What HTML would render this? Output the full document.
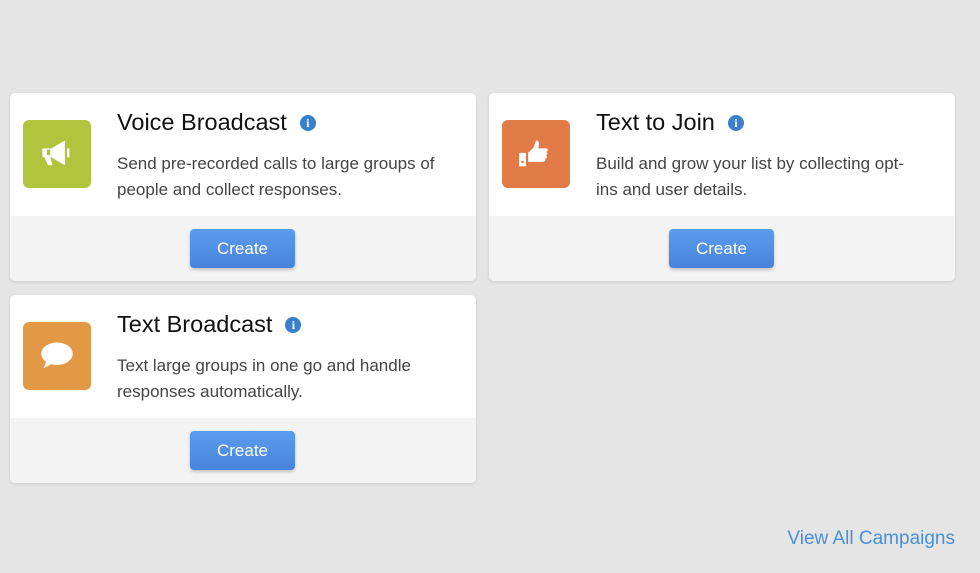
<!DOCTYPE html>
<html><head><style>
body{margin:0;width:980px;height:573px;background:#e5e5e5;font-family:"Liberation Sans",sans-serif;position:relative;overflow:hidden}
.card{position:absolute;width:466px;height:188px;background:#fff;border-radius:5px;box-shadow:0 1px 3px rgba(0,0,0,.12);overflow:hidden}
.top{height:123px;position:relative}
.foot{height:65px;background:#f3f3f3;position:relative}
.ic{position:absolute;left:13px;top:27px;width:68px;height:68px;border-radius:6px}
.ic svg{position:absolute;left:16px;top:16px}
.t{position:absolute;left:107px;top:16px;font-size:23.5px;color:#111}
.i{display:inline-block;width:16px;height:16px;border-radius:50%;background:#3a7fcc;color:#fff;font:bold 12px/16px "Liberation Serif",serif;text-align:center;vertical-align:3px;margin-left:13px}
.d{position:absolute;left:107px;top:58px;width:325px;font-size:17px;line-height:26px;color:#444}
.b{position:absolute;left:180px;top:13px;width:105px;height:39px;border-radius:4px;background:linear-gradient(#5b9ded,#4883db);color:#fff;font-size:17px;line-height:40px;text-align:center;box-shadow:0 2px 3px rgba(0,0,0,.2)}
.v{position:absolute;right:25px;top:528px;font-size:19px;color:#4a90d9}
</style></head><body>
<div class="card" style="left:10px;top:93px"><div class="top">
<div class="ic" style="background:#b0c53d"><svg width="36" height="36" viewBox="0 0 32 32"><path d="M3 11h8l12-7v22l-12-7h-1l2 7h-4l-3-7H3z" fill="#fff"/><path d="M26 11v8" stroke="#fff" stroke-width="2"/><rect x="7" y="12" width="3" height="5" fill="#b0c53d"/></svg></div>
<div class="t">Voice Broadcast<span class="i">i</span></div>
<div class="d">Send pre-recorded calls to large groups of people and collect responses.</div></div>
<div class="foot"><div class="b">Create</div></div></div>

<div class="card" style="left:489px;top:93px"><div class="top">
<div class="ic" style="background:#e07b47"><svg width="36" height="36" viewBox="0 0 32 32"><rect x="1" y="15" width="6" height="12" fill="#fff"/><rect x="3" y="22" width="2" height="2" fill="#e07b47"/><path d="M9 15l5-5 2-6c3 0 3 3 2 7h7c2 0 2 3 0 3 2 1 1 3 0 3 1 1 1 3-1 3 1 1 0 3-2 3H9z" fill="#fff"/></svg></div>
<div class="t">Text to Join<span class="i">i</span></div>
<div class="d">Build and grow your list by collecting opt-ins and user details.</div></div>
<div class="foot"><div class="b">Create</div></div></div>

<div class="card" style="left:10px;top:295px"><div class="top">
<div class="ic" style="background:#e29844"><svg width="36" height="36" viewBox="0 0 32 32"><ellipse cx="16" cy="14" rx="14" ry="10" fill="#fff"/><path d="M7 20l-3 7 9-5z" fill="#fff"/></svg></div>
<div class="t">Text Broadcast<span class="i">i</span></div>
<div class="d">Text large groups in one go and handle responses automatically.</div></div>
<div class="foot"><div class="b">Create</div></div></div>

<div class="v">View All Campaigns</div>
</body></html>
